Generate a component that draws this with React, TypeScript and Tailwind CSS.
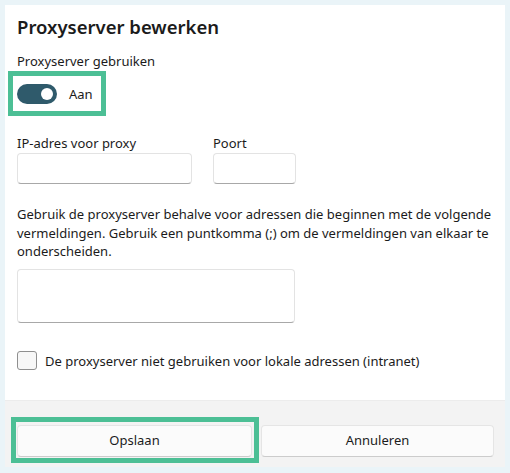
import React, { useState } from "react";

function Toggle({ on }: { on: boolean }) {
  return (
    <div
      className={`flex h-[20px] w-[40px] items-center rounded-full px-[4px] ${
        on ? "justify-end bg-[#2f5a6b]" : "justify-start border border-[#8a8a8a] bg-white"
      }`}
    >
      <div className={`rounded-full ${on ? "h-[12px] w-[12px] bg-white" : "h-[10px] w-[10px] bg-[#5d5d5d]"}`} />
    </div>
  );
}

function TextBox({ className }: { className: string }) {
  return (
    <div
      className={`rounded-[4px] border border-[#e3e3e3] border-b-[#a8a8a8] bg-white ${className}`}
    />
  );
}

export default function App() {
  const [useProxy, setUseProxy] = useState(true);
  const [noLocal, setNoLocal] = useState(false);

  return (
    <div
      className="h-[473px] w-[510px] bg-[#eaf4f8] px-[5px] pt-[5px] text-[13px] text-[#1b1b1b]"
      style={{ fontFamily: '"Noto Sans", "Open Sans", sans-serif' }}
    >
      <div className="flex h-[395px] flex-col bg-white pl-[12px] pt-[9px]">
        <h1 className="text-[18.5px] font-semibold leading-[26px]">Proxyserver bewerken</h1>
        <div className="mt-[11px] leading-[20px]">Proxyserver gebruiken</div>

        <div
          onClick={() => setUseProxy(!useProxy)}
          className="ml-[-9px] flex h-[45px] w-[98px] cursor-pointer items-center gap-[12px] border-[5px] border-[#4cbf95] pl-[4px]"
        >
          <Toggle on={useProxy} />
          <span className="leading-[20px]">{useProxy ? "Aan" : "Uit"}</span>
        </div>

        <div className="mt-[18px] flex gap-[21px]">
          <div className="flex flex-col">
            <span className="leading-[19px]">IP-adres voor proxy</span>
            <TextBox className="h-[31px] w-[175px]" />
          </div>
          <div className="flex flex-col">
            <span className="leading-[19px]">Poort</span>
            <TextBox className="h-[31px] w-[83px]" />
          </div>
        </div>

        <p className="mt-[21px] w-[488px] leading-[18.5px]">
          Gebruik de proxyserver behalve voor adressen die beginnen met de volgende vermeldingen. Gebruik een
          puntkomma (;) om de vermeldingen van elkaar te onderscheiden.
        </p>

        <TextBox className="mt-[8px] h-[54px] w-[278px]" />

        <label
          className="mt-[28px] flex cursor-pointer items-center gap-[8px]"
          onClick={() => setNoLocal(!noLocal)}
        >
          <span
            className={`h-[19px] w-[20px] rounded-[3px] border ${
              noLocal ? "border-[#2f5a6b] bg-[#2f5a6b]" : "border-[#8f8f8f] bg-[#f7f7f7]"
            }`}
          />
          <span className="leading-[20px]">De proxyserver niet gebruiken voor lokale adressen (intranet)</span>
        </label>
      </div>

      <div className="flex h-[67px] items-start gap-[2px] border-t border-[#ececec] bg-[#f3f3f3] pl-[6px] pr-[11px] pt-[16px]">
        <div className="h-[46px] w-[248px] border-[5px] border-[#4cbf95] pb-px pl-px pr-[2px] pt-[3px]">
          <button className="h-[32px] w-full rounded-[4px] border border-[#e5e5e5] border-b-[#cccccc] bg-[#fbfbfb]">
            Opslaan
          </button>
        </div>
        <button className="mt-[8px] h-[32px] flex-1 rounded-[4px] border border-[#e5e5e5] border-b-[#cccccc] bg-[#fbfbfb]">
          Annuleren
        </button>
      </div>
    </div>
  );
}
